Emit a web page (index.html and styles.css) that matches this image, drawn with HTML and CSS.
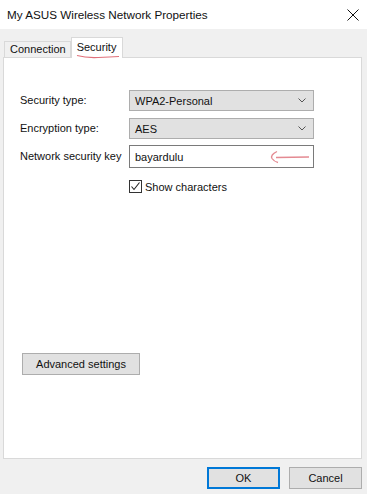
FILE: index.html
```html
<!DOCTYPE html>
<html lang="en">
<head>
    <meta charset="UTF-8">
    <title>My ASUS Wireless Network Properties</title>
    <link rel="stylesheet" href="styles.css">
</head>
<body>
    <div class="window">
        <div class="titlebar">
            <span class="title">My ASUS Wireless Network Properties</span>
            <svg class="close" width="12" height="12" viewBox="0 0 12 12">
                <path d="M0.5 0.5 L11.5 11.5 M11.5 0.5 L0.5 11.5" stroke="#111" stroke-width="1" fill="none"/>
            </svg>
        </div>

        <div class="dialog">
            <div class="tabs">
                <div class="tab">Connection</div>
                <div class="tab active">
                    Security
                    <svg class="scribble" width="44" height="5" viewBox="0 0 44 5">
                        <path d="M1 1.5 Q 10 4 22 3.5 T 43 2.5" stroke="#e0707a" stroke-width="1.2" fill="none"/>
                    </svg>
                </div>
            </div>

            <div class="panel">
                <div class="form">
                    <label class="label">Security type:</label>
                    <div class="select">
                        <span>WPA2-Personal</span>
                        <svg width="8" height="5" viewBox="0 0 8 5"><path d="M0.5 0.5 L4 4 L7.5 0.5" stroke="#555" fill="none"/></svg>
                    </div>

                    <label class="label">Encryption type:</label>
                    <div class="select">
                        <span>AES</span>
                        <svg width="8" height="5" viewBox="0 0 8 5"><path d="M0.5 0.5 L4 4 L7.5 0.5" stroke="#555" fill="none"/></svg>
                    </div>

                    <label class="label tall">Network security key</label>
                    <div class="input">
                        <span>bayardulu</span>
                        <svg class="arrow" width="42" height="14" viewBox="0 0 42 14">
                            <path d="M9 1.5 Q 2 5 4 8.5 Q 6 11.5 10 12.5" stroke="#e48a92" stroke-width="1.3" fill="none"/>
                            <path d="M8 7.5 L 41 7" stroke="#e48a92" stroke-width="1.3" fill="none"/>
                        </svg>
                    </div>

                    <span></span>
                    <label class="check">
                        <span class="box">
                            <svg width="11" height="11" viewBox="0 0 11 11"><path d="M1.5 5.5 L4 8.5 L9.5 1.5" stroke="#222" stroke-width="1.1" fill="none"/></svg>
                        </span>
                        Show characters
                    </label>
                </div>

                <button class="button advanced">Advanced settings</button>
            </div>

            <div class="footer">
                <button class="button default">OK</button>
                <button class="button">Cancel</button>
            </div>
        </div>
    </div>
</body>
</html>
```

FILE: styles.css
```css
:root {
    --face: #f0f0f0;
    --button-face: #e1e1e1;
    --button-border: #adadad;
    --panel-border: #d9d9d9;
    --accent: #0078d7;
}

* {
    box-sizing: border-box;
}

body {
    margin: 0;
    font-family: 'Liberation Sans', Arial, sans-serif;
    font-size: 11px;
    color: #111;
    background: #fff;
}

.window {
    width: 367px;
    height: 494px;
    display: flex;
    flex-direction: column;
    overflow: hidden;
}

.titlebar {
    height: 29px;
    background: #fff;
    display: flex;
    align-items: center;
    justify-content: space-between;
    padding: 0 7px 0 7px;
    flex-shrink: 0;
}

.title {
    font-size: 11.7px;
    color: #111;
}

.close {
    margin-right: 1px;
}

.dialog {
    flex: 1;
    background: var(--face);
    display: flex;
    flex-direction: column;
    padding: 0 5px 0 3px;
}

.tabs {
    display: flex;
    align-items: flex-end;
    height: 28px;
    padding-left: 1px;
}

.tab {
    height: 16px;
    line-height: 15px;
    padding: 0 4px 0 5px;
    border: 1px solid var(--panel-border);
    border-bottom: none;
    background: var(--face);
    white-space: nowrap;
}

.tab.active {
    position: relative;
    height: 21px;
    line-height: 18px;
    background: #fff;
    padding: 0 6px 0 5px;
    margin-bottom: -1px;
    z-index: 1;
}

.scribble {
    position: absolute;
    left: 4px;
    top: 16px;
}

.panel {
    height: 402px;
    background: #fff;
    border: 1px solid var(--panel-border);
    padding: 32px 0 0 16px;
}

.form {
    display: grid;
    grid-template-columns: 109px 185px;
    grid-template-rows: 28px 27px 35px 13px;
    align-items: start;
}

.label {
    line-height: 21px;
    white-space: nowrap;
}

.label.tall {
    line-height: 23px;
}

.select {
    height: 21px;
    background: var(--button-face);
    border: 1px solid var(--button-border);
    display: flex;
    align-items: center;
    justify-content: space-between;
    padding: 0 7px 0 5px;
}

.input {
    height: 23px;
    background: #fff;
    border: 1px solid #7a7a7a;
    display: flex;
    align-items: center;
    justify-content: space-between;
    padding: 0 3px 0 5px;
}

.check {
    display: flex;
    align-items: center;
    gap: 3px;
    height: 13px;
    white-space: nowrap;
}

.box {
    width: 13px;
    height: 13px;
    border: 1px solid #333;
    background: #fff;
    display: flex;
    flex-shrink: 0;
}

.button {
    font-family: inherit;
    font-size: 11px;
    color: #111;
    background: var(--button-face);
    border: 1px solid var(--button-border);
    height: 22px;
    padding: 0;
}

.advanced {
    display: block;
    width: 118px;
    margin: 160px 0 0 2px;
}

.footer {
    display: flex;
    justify-content: flex-end;
    gap: 9px;
    padding-top: 8px;
}

.footer .button {
    width: 73px;
}

.button.default {
    border: 2px solid var(--accent);
}
```
